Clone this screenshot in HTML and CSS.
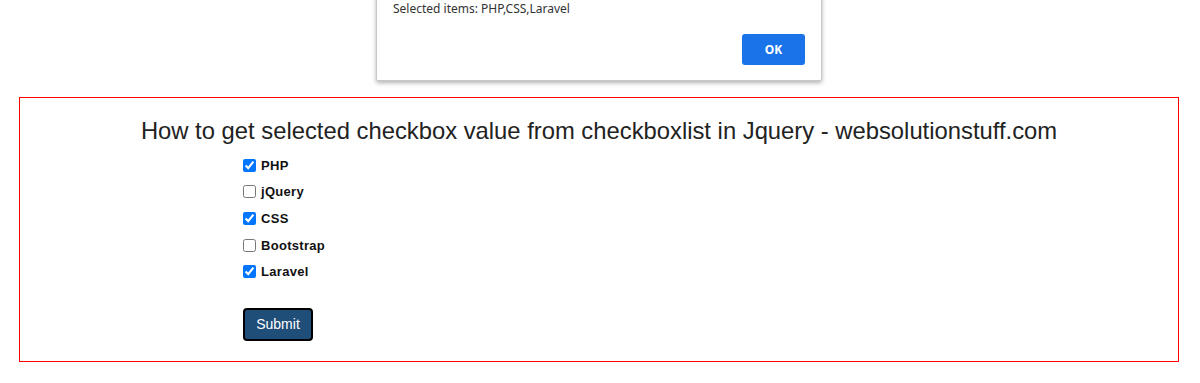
FILE: index.html
```html
<!DOCTYPE html>
<html>
<head>
<meta charset="utf-8">
<link rel="stylesheet" href="styles.css">
</head>
<body>
<div class="page">
  <div class="box">
    <h1 class="title">How to get selected checkbox value from checkboxlist in Jquery - websolutionstuff.com</h1>
    <div class="list">
      <label class="item"><input type="checkbox" checked><span>PHP</span></label>
      <label class="item"><input type="checkbox"><span>jQuery</span></label>
      <label class="item"><input type="checkbox" checked><span>CSS</span></label>
      <label class="item"><input type="checkbox"><span>Bootstrap</span></label>
      <label class="item"><input type="checkbox" checked><span>Laravel</span></label>
      <button class="submit" type="button">Submit</button>
    </div>
  </div>
</div>
<div class="dialog">
  <div class="msg">Selected items: PHP,CSS,Laravel</div>
  <div class="actions"><button class="ok" type="button">OK</button></div>
</div>
</body>
</html>
```

FILE: styles.css
```css
html, body {
  margin: 0;
  padding: 0;
  background: #fff;
}
body {
  width: 1200px;
  height: 383px;
  overflow: hidden;
  position: relative;
  font-family: "Liberation Sans", Arial, sans-serif;
}
.page {
  padding: 97px 0 0 19px;
}
.box {
  box-sizing: border-box;
  width: 1160px;
  height: 265px;
  border: 1px solid #f00;
  display: flex;
  flex-direction: column;
}
.title {
  margin: 0;
  padding-top: 19px;
  font-weight: normal;
  font-size: 23.8px;
  line-height: 28px;
  color: #222;
  text-align: center;
}
.list {
  display: flex;
  flex-direction: column;
  align-items: flex-start;
  padding-left: 219px;
  padding-top: 7px;
}
.item {
  display: flex;
  align-items: center;
  height: 26.6px;
  font-size: 13px;
  letter-spacing: 0.3px;
  font-weight: bold;
  color: #111;
}
.item input {
  width: 13px;
  height: 13px;
  margin: 0 5px 0 4px;
}
.submit {
  margin: 23px 0 0 4px;
  box-sizing: border-box;
  width: 70px;
  height: 33px;
  background: #1f4e79;
  color: #fff;
  border: 2px solid #000;
  border-radius: 4px;
  font-family: "Liberation Sans", Arial, sans-serif;
  font-size: 14px;
  padding: 0;
}
.dialog {
  position: absolute;
  left: 376px;
  top: -60px;
  width: 446px;
  height: 141px;
  box-sizing: border-box;
  background: #fff;
  border: 1px solid #c8c8c8;
  border-radius: 2px;
  box-shadow: 0 2px 4px rgba(0,0,0,0.3);
  display: flex;
  flex-direction: column;
  justify-content: flex-end;
  padding: 0 16px 15px 16px;
  font-family: "Noto Sans", "Open Sans", sans-serif;
}
.msg {
  font-size: 12px;
  line-height: 16px;
  color: #333;
  margin-bottom: 17px;
}
.actions {
  display: flex;
  justify-content: flex-end;
}
.ok {
  width: 63px;
  height: 31px;
  background: #1a73e8;
  color: #fff;
  border: none;
  border-radius: 3px;
  font-family: "Noto Sans", "Open Sans", sans-serif;
  font-size: 12px;
  font-weight: bold;
  padding: 0;
}
```
